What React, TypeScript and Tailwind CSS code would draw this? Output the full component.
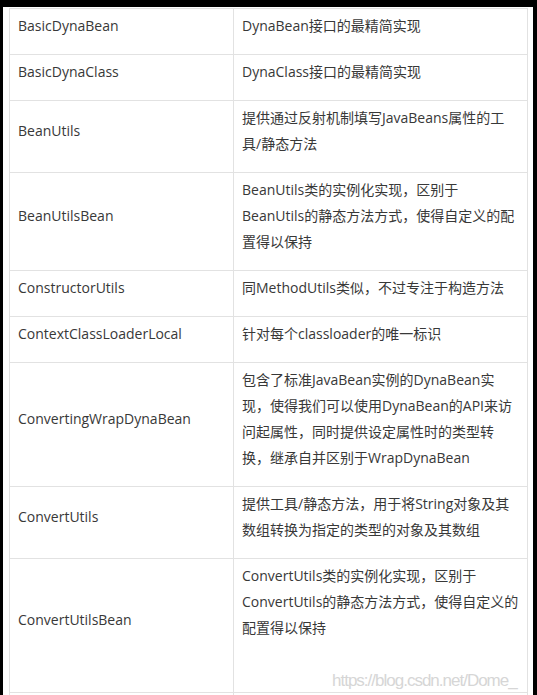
import React from 'react';

type Row = {
  name: string;
  lines: string[];
  extraBottom?: boolean;
};

const rows: Row[] = [
  { name: 'BasicDynaBean', lines: ['DynaBean接口的最精简实现'] },
  { name: 'BasicDynaClass', lines: ['DynaClass接口的最精简实现'] },
  { name: 'BeanUtils', lines: ['提供通过反射机制填写JavaBeans属性的工', '具/静态方法'] },
  {
    name: 'BeanUtilsBean',
    lines: ['BeanUtils类的实例化实现，区别于', 'BeanUtils的静态方法方式，使得自定义的配', '置得以保持'],
  },
  { name: 'ConstructorUtils', lines: ['同MethodUtils类似，不过专注于构造方法'] },
  { name: 'ContextClassLoaderLocal', lines: ['针对每个classloader的唯一标识'] },
  {
    name: 'ConvertingWrapDynaBean',
    lines: [
      '包含了标准JavaBean实例的DynaBean实',
      '现，使得我们可以使用DynaBean的API来访',
      '问起属性，同时提供设定属性时的类型转',
      '换，继承自并区别于WrapDynaBean',
    ],
  },
  { name: 'ConvertUtils', lines: ['提供工具/静态方法，用于将String对象及其', '数组转换为指定的类型的对象及其数组'] },
  {
    name: 'ConvertUtilsBean',
    lines: ['ConvertUtils类的实例化实现，区别于', 'ConvertUtils的静态方法方式，使得自定义的', '配置得以保持'],
    extraBottom: true,
  },
];

const App: React.FC = () => {
  return (
    <div className="w-[537px] h-[695px] overflow-hidden bg-black pt-[7px] pl-[3px] pr-[4px]">
      <div
        className="relative h-full bg-white pl-[6px] pt-[1px] text-[#383838] text-[14px] leading-[26px]"
        style={{ fontFamily: '"Open Sans", "Noto Sans CJK SC", sans-serif' }}
      >
        <table className="w-[518px] table-fixed border-collapse">
          <colgroup>
            <col className="w-[224px]" />
            <col className="w-[294px]" />
          </colgroup>
          <tbody>
            {rows.map((row) => (
              <tr key={row.name}>
                <td className="border border-[#e2e2e2] pl-[8px] pr-2 pt-[4px] pb-[15px] align-middle">
                  {row.name}
                </td>
                <td
                  className={
                    row.extraBottom
                      ? 'border border-[#e2e2e2] pl-[8px] pr-1 pt-[4px] pb-[51px] align-middle whitespace-nowrap'
                      : 'border border-[#e2e2e2] pl-[8px] pr-1 pt-[4px] pb-[15px] align-middle whitespace-nowrap'
                  }
                >
                  {row.lines.map((line, i) => (
                    <div key={i}>{line}</div>
                  ))}
                </td>
              </tr>
            ))}
            <tr>
              <td className="border border-[#e2e2e2] h-[30px]" />
              <td className="border border-[#e2e2e2] h-[30px]" />
            </tr>
          </tbody>
        </table>
        {/* watermark */}
        <div
          className="absolute left-[329px] top-[661px] text-[17px] tracking-[-1px] text-[#d6d6d6]"
          style={{ fontFamily: '"Liberation Sans", Arial, sans-serif' }}
        >
          https://blog.csdn.net/Dome_
        </div>
      </div>
    </div>
  );
};

export default App;
